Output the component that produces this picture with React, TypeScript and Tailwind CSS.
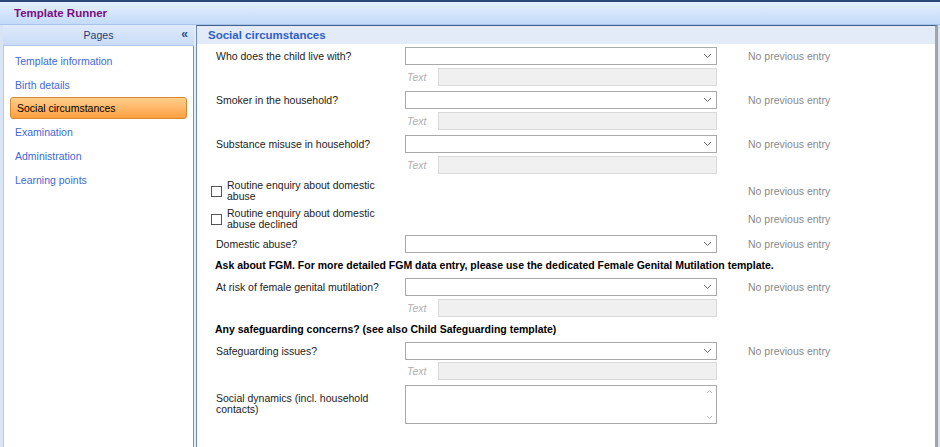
import React from "react";

const pages = [
  "Template information",
  "Birth details",
  "Social circumstances",
  "Examination",
  "Administration",
  "Learning points",
];

const Chevron = () => (
  <svg width="9" height="6" viewBox="0 0 9 6" className="text-[#666]">
    <path d="M1 1l3.5 3.5L8 1" fill="none" stroke="currentColor" strokeWidth="1" />
  </svg>
);

const Select = () => (
  <div className="w-[312px] h-[18px] border border-[#a9a9a9] bg-white flex items-center justify-end pr-[4px]">
    <Chevron />
  </div>
);

const Prev = () => <div className="ml-[31px] text-[#8a8a8a]">No previous entry</div>;

const SelectRow = ({ label }: { label: string }) => (
  <div className="h-[22px] flex items-center">
    <div className="w-[208px] pl-[19px] text-[#222] whitespace-nowrap">{label}</div>
    <Select />
    <Prev />
  </div>
);

const TextRow = () => (
  <div className="h-[22px] flex items-start pt-[1px]">
    <div className="w-[208px]" />
    <div className="w-[33px] h-[18px] flex items-center pl-[2px] italic text-[#b0b0b0]">Text</div>
    <div className="w-[279px] h-[18px] border border-[#d9d9d9] bg-[#f0f0f0]" />
  </div>
);

const CheckRow = ({ lines }: { lines: string[] }) => (
  <div className="h-[28px] flex items-center">
    <div className="w-[208px] pl-[14px] flex items-center">
      <div className="w-[11px] h-[11px] border border-[#555] bg-white shrink-0" />
      <div className="ml-[5px] leading-[11px] text-[#222]">
        {lines.map((l) => (
          <div key={l}>{l}</div>
        ))}
      </div>
    </div>
    <div className="w-[343px]" />
    <div className="text-[#8a8a8a]">No previous entry</div>
  </div>
);

const Bold = ({ children, h }: { children: React.ReactNode; h: string }) => (
  <div className={`${h} flex items-center pl-[18px] font-bold text-black whitespace-nowrap`}>{children}</div>
);

export default function App() {
  return (
    <div
      className="w-[940px] h-[447px] overflow-hidden bg-white flex flex-col text-[10.5px] leading-[13px]"
      style={{ fontFamily: '"Liberation Sans", Arial, sans-serif' }}
    >
      <div className="h-[2px] bg-[#2a4778]" />
      <div className="h-[23px] bg-gradient-to-b from-[#e4efff] to-[#c4dbf9] flex items-center pl-[14px] border-b border-[#a9c3e8]">
        <span className="font-bold text-[11.5px] text-[#7a0f80]">Template Runner</span>
      </div>
      <div className="flex-1 flex bg-[#d7e4f6]">
        <div className="w-[3px]" />
        <div className="w-[191px] flex flex-col">
          <div className="h-[21px] bg-gradient-to-b from-[#dfeafc] to-[#c9dcf7] flex items-center relative border-b border-[#b0c8ea]">
            <div className="flex-1 text-center text-[#1f3e74]">Pages</div>
            <div className="absolute right-[6px] top-[3px] text-[#2a4f8c] font-bold text-[12px]">«</div>
          </div>
          <div className="flex-1 bg-white border-l border-[#b9cde9] border-r border-r-[#6e95d4] pt-[3px]">
            {pages.map((p) => (
              <div
                key={p}
                className={
                  p === "Social circumstances"
                    ? "h-[22px] mx-[6px] mb-[1px] flex items-center pl-[6px] text-black rounded-[3px] border border-[#d88a33] bg-gradient-to-b from-[#ffcf8b] to-[#ff9f3e]"
                    : "h-[24px] flex items-center pl-[11px] text-[#3f69d6]"
                }
              >
                {p}
              </div>
            ))}
          </div>
        </div>
        <div className="w-[2px] bg-[#e6ebf1]" />
        <div className="flex-1 flex flex-col bg-white border-l border-[#6a8dc6] border-t border-t-[#40628f] border-r-[3px] border-r-[#a3a3a3] mr-[2px]">
          <div className="h-[18px] bg-[#e3ebf9] flex items-center pl-[11px] font-bold text-[11.5px] text-[#2f60c6]">
            Social circumstances
          </div>
          <div className="pt-[1px]">
            <SelectRow label="Who does the child live with?" />
            <TextRow />
            <SelectRow label="Smoker in the household?" />
            <TextRow />
            <SelectRow label="Substance misuse in household?" />
            <TextRow />
            <CheckRow lines={["Routine enquiry about domestic", "abuse"]} />
            <CheckRow lines={["Routine enquiry about domestic", "abuse declined"]} />
            <SelectRow label="Domestic abuse?" />
            <Bold h="h-[21px]">
              Ask about FGM. For more detailed FGM data entry, please use the dedicated Female Genital Mutilation template.
            </Bold>
            <SelectRow label="At risk of female genital mutilation?" />
            <div className="h-[20px] flex items-start pt-[1px]">
              <div className="w-[208px]" />
              <div className="w-[33px] h-[18px] flex items-center pl-[2px] italic text-[#b0b0b0]">Text</div>
              <div className="w-[279px] h-[18px] border border-[#d9d9d9] bg-[#f0f0f0]" />
            </div>
            <Bold h="h-[22px]">Any safeguarding concerns? (see also Child Safeguarding template)</Bold>
            <SelectRow label="Safeguarding issues?" />
            <div className="h-[21px] flex items-start">
              <div className="w-[208px]" />
              <div className="w-[33px] h-[18px] flex items-center pl-[2px] italic text-[#b0b0b0]">Text</div>
              <div className="w-[279px] h-[18px] border border-[#d9d9d9] bg-[#f0f0f0]" />
            </div>
            <div className="flex items-center h-[42px]">
              <div className="w-[208px] pl-[19px] text-[#222] leading-[11px]">
                Social dynamics (incl. household
                <br />
                contacts)
              </div>
              <div className="w-[312px] h-[39px] border border-[#a9a9a9] bg-white flex justify-end">
                <div className="w-[14px] flex flex-col items-center justify-between py-[3px] text-[#bbb]">
                  <svg width="7" height="5" viewBox="0 0 7 5">
                    <path d="M1 4l2.5-2.5L6 4" fill="none" stroke="currentColor" />
                  </svg>
                  <svg width="7" height="5" viewBox="0 0 7 5">
                    <path d="M1 1l2.5 2.5L6 1" fill="none" stroke="currentColor" />
                  </svg>
                </div>
              </div>
            </div>
          </div>
        </div>
      </div>
    </div>
  );
}
